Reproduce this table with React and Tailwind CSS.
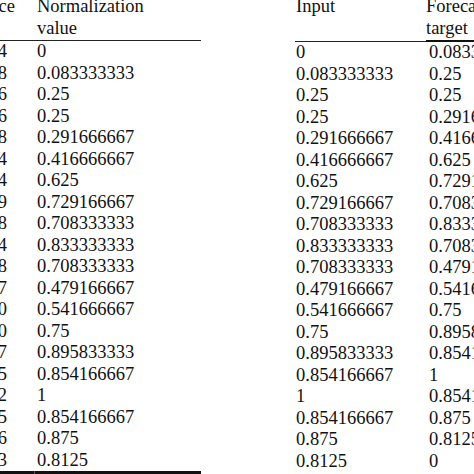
const left = [
  ['204', '0'],
  ['208', '0.083333333'],
  ['216', '0.25'],
  ['216', '0.25'],
  ['218', '0.291666667'],
  ['224', '0.416666667'],
  ['234', '0.625'],
  ['239', '0.729166667'],
  ['238', '0.708333333'],
  ['244', '0.833333333'],
  ['238', '0.708333333'],
  ['227', '0.479166667'],
  ['230', '0.541666667'],
  ['240', '0.75'],
  ['247', '0.895833333'],
  ['245', '0.854166667'],
  ['252', '1'],
  ['245', '0.854166667'],
  ['246', '0.875'],
  ['243', '0.8125'],
]

const right = [
  ['0', '0.083333333'],
  ['0.083333333', '0.25'],
  ['0.25', '0.25'],
  ['0.25', '0.291666667'],
  ['0.291666667', '0.416666667'],
  ['0.416666667', '0.625'],
  ['0.625', '0.729166667'],
  ['0.729166667', '0.708333333'],
  ['0.708333333', '0.833333333'],
  ['0.833333333', '0.708333333'],
  ['0.708333333', '0.479166667'],
  ['0.479166667', '0.541666667'],
  ['0.541666667', '0.75'],
  ['0.75', '0.895833333'],
  ['0.895833333', '0.854166667'],
  ['0.854166667', '1'],
  ['1', '0.854166667'],
  ['0.854166667', '0.875'],
  ['0.875', '0.8125'],
  ['0.8125', '0'],
]

export default function App() {
  return (
    <div
      className="w-[474px] h-[474px] overflow-hidden bg-white text-[#111] flex items-start text-[18.5px] leading-[21.5px] whitespace-nowrap"
      style={{ fontFamily: '"Liberation Serif", "Times New Roman", serif' }}
    >
      {/* Left table (first column cropped) */}
      <div className="w-[201px] shrink-0 -mt-[4px]">
        <div className="flex border-b border-[#222] pb-[1px]">
          <div className="w-[15px] shrink-0 overflow-hidden flex justify-end">
            <span>Sequence</span>
          </div>
          <div className="pl-[22px]">
            Normalization
            <br />
            value
          </div>
        </div>
        {left.map(([a, b], i) => (
          <div key={i} className="flex">
            <div className="w-[15px] shrink-0 overflow-hidden flex justify-end pr-[8px]">
              <span>{a}</span>
            </div>
            <div className="pl-[22px]">{b}</div>
          </div>
        ))}
        <div className="flex">
          <div className="w-[34px] h-[3px] bg-[#111]" />
          <div className="w-[1px] h-[3px] bg-[#555]" />
          <div className="flex-1 h-[3px] bg-[#111]" />
        </div>
      </div>

      {/* Right table (last column cropped) */}
      <div className="ml-[94px] flex-1 -mt-[4px]">
        <div className="flex">
          <div className="w-[131px] shrink-0 pl-[1px] border-b border-[#222] pb-[2px]">
            Input
            <br />
            <span className="invisible">x</span>
          </div>
          <div className="flex-1 border-b-2 border-[#111] pb-[1px]">
            Forecast
            <br />
            target
          </div>
        </div>
        {right.map(([a, b], i) => (
          <div key={i} className="flex">
            <div className="w-[131px] shrink-0 pl-[1px]">{a}</div>
            <div className="flex-1 pl-[3px]">{b}</div>
          </div>
        ))}
      </div>
    </div>
  )
}
